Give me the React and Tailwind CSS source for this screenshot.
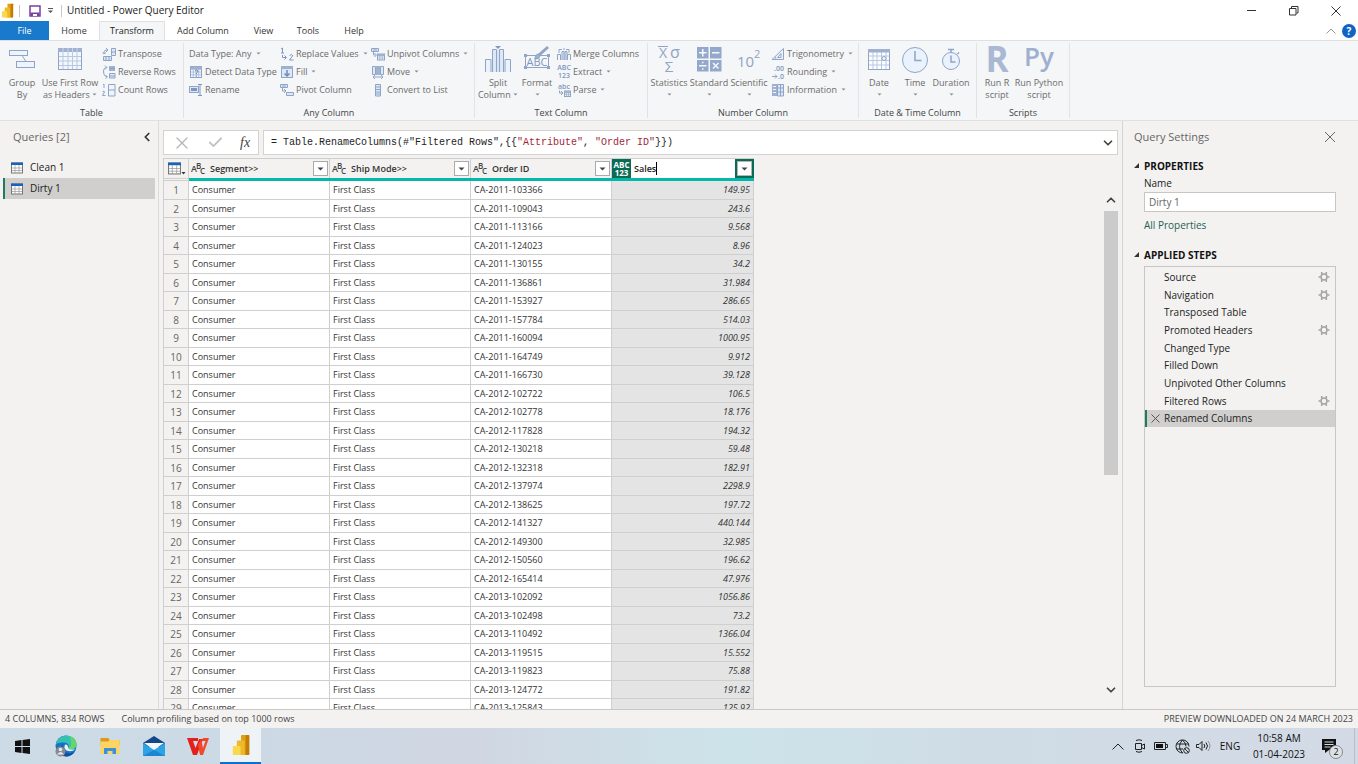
import React from "react";
import { ChevronDown, ChevronUp, ChevronLeft, X, Check } from "lucide-react";

const LINE = "#8fa4c6";
const FILL = "#dde8f6";
const DARK = "#9fb1cf";

const rows = [
  ["CA-2011-103366", "149.95"],
  ["CA-2011-109043", "243.6"],
  ["CA-2011-113166", "9.568"],
  ["CA-2011-124023", "8.96"],
  ["CA-2011-130155", "34.2"],
  ["CA-2011-136861", "31.984"],
  ["CA-2011-153927", "286.65"],
  ["CA-2011-157784", "514.03"],
  ["CA-2011-160094", "1000.95"],
  ["CA-2011-164749", "9.912"],
  ["CA-2011-166730", "39.128"],
  ["CA-2012-102722", "106.5"],
  ["CA-2012-102778", "18.176"],
  ["CA-2012-117828", "194.32"],
  ["CA-2012-130218", "59.48"],
  ["CA-2012-132318", "182.91"],
  ["CA-2012-137974", "2298.9"],
  ["CA-2012-138625", "197.72"],
  ["CA-2012-141327", "440.144"],
  ["CA-2012-149300", "32.985"],
  ["CA-2012-150560", "196.62"],
  ["CA-2012-165414", "47.976"],
  ["CA-2013-102092", "1056.86"],
  ["CA-2013-102498", "73.2"],
  ["CA-2013-110492", "1366.04"],
  ["CA-2013-119515", "15.552"],
  ["CA-2013-119823", "75.88"],
  ["CA-2013-124772", "191.82"],
  ["CA-2013-125843", "125.92"],
];

const steps = [
  { name: "Source", gear: true },
  { name: "Navigation", gear: true },
  { name: "Transposed Table" },
  { name: "Promoted Headers", gear: true },
  { name: "Changed Type" },
  { name: "Filled Down" },
  { name: "Unpivoted Other Columns" },
  { name: "Filtered Rows", gear: true },
  { name: "Renamed Columns", active: true },
];

/* ---------- ribbon icons ---------- */

function Svg({ w = 14, h = 14, children }) {
  return (
    <svg width={w} height={h} viewBox={`0 0 ${w} ${h}`} fill="none" stroke={LINE} strokeWidth="1" className="shrink-0 overflow-visible">
      {children}
    </svg>
  );
}

// little grid with a dark header, reused by several icons
function Grid({ x, y, w, h, cols = 3, rws = 3, head = DARK }) {
  const lines = [];
  for (let i = 1; i < cols; i++) lines.push(`M${x + (w / cols) * i} ${y}v${h}`);
  for (let i = 1; i < rws; i++) lines.push(`M${x} ${y + (h / rws) * i}h${w}`);
  return (
    <g>
      <rect x={x} y={y} width={w} height={h} fill="#f2f7fd" />
      <path d={lines.join("")} strokeOpacity=".6" />
      <rect x={x} y={y} width={w} height={h / rws} fill={head} stroke="none" />
    </g>
  );
}

const GroupByIcon = () => (
  <Svg w={28} h={28}>
    <rect x="1.5" y="5.5" width="18" height="5" fill="#eef4fc" />
    <path d="M14 10.5l4 6" />
    <rect x="8.5" y="16.5" width="18" height="6" fill="#eef4fc" />
  </Svg>
);
const HeadersIcon = () => (
  <Svg w={28} h={28}>
    <rect x="2.5" y="3.5" width="23" height="21" fill="#f2f7fd" />
    <path d="M7 4v20M12 4v20M16.5 4v20M21 4v20M3 11.5h22M3 16h22M3 20.5h22" stroke="#b9c8e0" />
    <path d="M2 3h24v4H2z" fill={DARK} stroke="none" />
    <path d="M7 3v4M12 3v4M16.5 3v4M21 3v4" stroke="#c9d5e8" />
  </Svg>
);
const TransposeIcon = () => (
  <Svg>
    <path d="M9.5 1.5h4v7h-4zM9.5 5h4M1.5 9.5h8v4h-8zM4 9.5v4M7 9.5v4" fill={FILL} />
    <path d="M2 7V5q0-2 3-2M4 1l2 2-2 2M.5 5.500L2 7l2-1.5" />
  </Svg>
);
const ReverseIcon = () => (
  <Svg>
    <rect x="7" y="1" width="6" height="5" fill={DARK} stroke="none" />
    <path d="M7.5 8.500h5.500v4.500H7.500zM7.500 11h5.500M7 3.500h6" fill={FILL} />
    <path d="M4.500 2.500Q1.500 2.500 1.500 7t3.500 5M3 .5l2 2-2 2M3.500 10l2 2-2 1.500" />
  </Svg>
);
const CountIcon = () => (
  <Svg>
    <path d="M1 2l1-1v4M.5 8.500q2-1 2 .5L.5 12.500h3" />
    <path d="M6.500 1.500h6.500v11.500H6.500zM6.500 7h6.500" fill="#eef4fc" />
  </Svg>
);
const DetectIcon = () => (
  <Svg>
    <Grid x={1.5} y={1.5} w={11} h={11} cols={4} rws={4} />
    <path d="M6 6q2-2 3 0 0 1-1.500 2v1M7.500 10.500v1" stroke="#6f8bb8" />
  </Svg>
);
const RenameIcon = () => (
  <Svg>
    <rect x=".5" y="3.500" width="9" height="6" fill={FILL} />
    <rect x="2" y="5" width="6" height="3" fill="#7f97bf" stroke="none" />
    <path d="M9 1.500h4M9 12.500h4M11 2v10" stroke="#7f97bf" />
  </Svg>
);
const ReplaceIcon = () => (
  <Svg>
    <path d="M1 2l1.500-1v5M1 6h3M2.500 8v2.500H6M4.500 8.500l2 2-2 2M9.500 8.500Q12.500 6.500 12.500 9L9.500 13H13.500" stroke="#7f97bf" />
  </Svg>
);
const FillIcon = () => (
  <Svg>
    <rect x="1.5" y="1.5" width="11" height="11" fill={FILL} />
    <path d="M1 1h12v3H1z" fill={DARK} stroke="none" />
    <path d="M7 5v6M4.500 8.500L7 11l2.500-2.500" stroke="#6f8bb8" strokeWidth="1.500" />
  </Svg>
);
const PivotIcon = () => (
  <Svg>
    <path d="M.5 1.500h7v3h-7zM3 1.500v3M5 1.500v3M6.500 9.500h7v3h-7z" fill={FILL} />
    <path d="M2.500 4.500V8h3M4 6l2 2-2 2" />
  </Svg>
);
const UnpivotIcon = () => (
  <Svg>
    <path d="M.5 1.500h7v3h-7zM3 1.500v3M5 1.500v3" fill={FILL} />
    <path d="M2.500 4.500V8h2M3.500 6l2 2-2 2" />
    <Grid x={6.5} y={7} w={7} h={6} />
  </Svg>
);
const MoveIcon = () => (
  <Svg>
    <path d="M1.500 1.500h3v8h-3zM9.500 1.500h3v8h-3z" fill={FILL} />
    <rect x="5" y="1" width="4" height="9" fill={DARK} stroke="none" />
    <path d="M2 12h10M4 10l-2 2 2 2M10 10l2 2-2 2" />
  </Svg>
);
const ListIcon = () => (
  <Svg>
    <path d="M4.500 1.500h5v11.500h-5zM4.500 4h5M4.500 6.500h5M4.500 9h5M4.500 11h5" fill={FILL} />
  </Svg>
);
const SplitIcon = () => (
  <Svg w={28} h={28}>
    <path d="M1.500 27V14.500h5.500V27M21 27V14.500h5.500V27" fill="#eaf3fd" />
    <path d="M8.500 27V4.500h4V27M15.500 27V4.500h4V27" fill={FILL} />
    <path d="M14 5v22" stroke="#c5d2e6" />
    <path d="M11 1h6l-3 3z" fill="#7f97bf" stroke="none" />
  </Svg>
);
const FormatIcon = () => (
  <Svg w={28} h={28}>
    <rect x="2.500" y="10.500" width="23" height="12" />
    <path d="M1 9h3v3H1zM24 9h3v3h-3zM1 21h3v3H1zM24 21h3v3h-3z" fill="#8fa4c6" stroke="none" />
    <text x="14" y="21" textAnchor="middle" fontSize="11" fontFamily="Open Sans, sans-serif" fill="#7f97bf" stroke="none">ABC</text>
    <path d="M25 2l-9 8" strokeWidth="3" />
    <path d="M16 9q-4 0-4 5 5 0 5-4z" fill={DARK} />
  </Svg>
);
const MergeIcon = () => (
  <Svg>
    <path d="M.5 13V7.500h3V13M10.500 13V7.500h3V13" />
    <path d="M5 13V4.500h2V13M8 13V4.500h2V13" fill={FILL} />
    <path d="M2 6V2.500h3M9 2.500h3V6M7 1v2" />
  </Svg>
);
const ExtractIcon = () => (
  <span className="flex flex-col items-center w-[14px] text-[7px] leading-[8px] font-semibold text-[#7f97bf]">
    <span>ABC</span>
    <span>123</span>
  </span>
);
const ParseIcon = () => (
  <Svg>
    <text x="7" y="6" textAnchor="middle" fontSize="7" fontWeight="600" fontFamily="Open Sans, sans-serif" fill="#7f97bf" stroke="none">abc</text>
    <path d="M2.500 7.500V10H5M4 8l2 2-2 2" />
    <Grid x={7.5} y={8} w={6} h={5.5} />
  </Svg>
);
const StatsIcon = () => (
  <Svg w={28} h={28}>
    <g fontFamily="Open Sans, sans-serif" fill="#8fa4c6" stroke="none" textAnchor="middle">
      <text x="8" y="13" fontSize="14">X</text>
      <text x="20" y="13" fontSize="16">σ</text>
      <text x="14" y="27" fontSize="15">Σ</text>
    </g>
    <path d="M3 1.500h10" />
  </Svg>
);
const StandardIcon = () => (
  <Svg w={28} h={28}>
    <path d="M2 2h11.500v11.500H2zM15 2h11.500v11.500H15zM2 15h11.500v11.500H2zM15 15h11.500v11.500H15z" fill="#93a8cb" stroke="none" />
    <path d="M4 7.750h7.500M7.750 4v7.500M17 7.750h7.500M4 20.750h7.500M18 18l5.500 5.500M23.500 18L18 23.500" stroke="#f4f7fb" strokeWidth="1.500" />
    <path d="M7 17.500h1.500M7 24h1.500" stroke="#f4f7fb" strokeWidth="1.500" />
  </Svg>
);
const ScientificIcon = () => (
  <Svg w={28} h={28}>
    <g fontFamily="Open Sans, sans-serif" fill="#8fa4c6" stroke="none">
      <text x="2" y="22" fontSize="15">10</text>
      <text x="19" y="13" fontSize="11">2</text>
    </g>
  </Svg>
);
const TrigIcon = () => (
  <Svg>
    <path d="M1 12.500L12.500 1.500v11zM6.500 10.500L10 6.500v4z" fill="#eef4fc" />
    <path d="M4 10q1 1 1 2.500" />
  </Svg>
);
const RoundingIcon = () => (
  <Svg>
    <g fontFamily="Open Sans, sans-serif" fill="#7f97bf" stroke="none" fontSize="7" fontWeight="600">
      <text x="3" y="6">.00</text>
      <text x="7" y="14">.0</text>
    </g>
    <path d="M1 11.500h5M4 9.500l2 2-2 2" />
  </Svg>
);
const InfoIcon = () => (
  <Svg>
    <rect x="1" y="1" width="5" height="12" fill={DARK} stroke="none" />
    <path d="M2 3.500h3M2 6.500h3M2 9.500h3" stroke="#eef4fc" />
    <path d="M6.500 1.500h6v11.500h-6zM6.500 5h6M6.500 9h6M9.500 1.500v11.500" fill={FILL} />
  </Svg>
);
const DateIcon = () => (
  <Svg w={28} h={28}>
    <rect x="3.500" y="4.500" width="21" height="20" fill="#fbfdff" />
    <path d="M8 7v17M12 7v17M16.500 7v17M21 7v17M4 11h20M4 15.500h20M4 20h20" stroke="#b9c8e0" />
    <path d="M3 4h22v3.500H3z" fill={DARK} stroke="none" />
    <circle cx="19" cy="13.500" r="2" fill="#f2f7fd" />
  </Svg>
);
const TimeIcon = () => (
  <Svg w={28} h={28}>
    <circle cx="14" cy="15" r="12.500" fill="#eaf3fd" />
    <path d="M14 6v9.500h6.500" strokeWidth="1.500" />
  </Svg>
);
const DurationIcon = () => (
  <Svg w={28} h={28}>
    <circle cx="14" cy="16" r="8.500" fill="#eaf3fd" />
    <path d="M14 10.500V17h4.500M14 7V5M11 4.500h6M20.500 9l1.500-1.500" strokeWidth="1.500" />
  </Svg>
);
const RIcon = () => (
  <Svg w={28} h={28}>
    <text x="14" y="27" textAnchor="middle" fontSize="35" fontWeight="700" fontFamily="Open Sans, sans-serif" fill="#a9b8d3" stroke="none">R</text>
  </Svg>
);
const PyIcon = () => (
  <Svg w={32} h={28}>
    <text x="16" y="21" textAnchor="middle" fontSize="26" fontWeight="600" fontFamily="Open Sans, sans-serif" fill="#9db0d0" stroke="none">Py</text>
  </Svg>
);

/* ---------- ribbon parts ---------- */

function Caret() {
  return (
    <svg width="5" height="3" viewBox="0 0 5 3" className="inline-block shrink-0 mb-[2px]">
      <path d="M.5.5h4L2.500 2.500z" fill="#8a8a8a" />
    </svg>
  );
}

function Small({ icon: Icon, label, caret }) {
  return (
    <button className="flex items-center gap-[2px] h-[18px] whitespace-nowrap">
      {Icon && <Icon />}
      <span>{label}</span>
      {caret && <span className="flex pl-[2px]"><Caret /></span>}
    </button>
  );
}

function Big({ icon: Icon, lines, caret, width }) {
  return (
    <button className={`flex flex-col items-center shrink-0 whitespace-nowrap leading-[12px] ${width}`}>
      <span className="h-[32px] flex items-start"><Icon /></span>
      <span>{lines[0]}</span>
      <span>
        {lines[1]} {caret && <Caret />}
      </span>
    </button>
  );
}

function Group({ title, width, children }) {
  return (
    <section className={`flex flex-col justify-between shrink-0 border-r border-[#e1e3e6] ${width}`}>
      <div className="flex pt-[2px]">{children}</div>
      <h2 className="text-center text-[#444] leading-[10px]">{title}</h2>
    </section>
  );
}

function Ribbon() {
  return (
    <div className="flex bg-[#f5f6f7] border-y border-[#dfe0e1] h-[81px] py-[2px] shrink-0 text-[9px] text-[#6b6b6b]">
      <Group title="Table" width="w-[184px] px-[2px]">
        <Big icon={GroupByIcon} lines={["Group", "By"]} width="w-[40px]" />
        <Big icon={HeadersIcon} lines={["Use First Row", "as Headers"]} caret width="w-[56px]" />
        <div className="flex flex-col pl-[4px]">
          <Small icon={TransposeIcon} label="Transpose" />
          <Small icon={ReverseIcon} label="Reverse Rows" />
          <Small icon={CountIcon} label="Count Rows" />
        </div>
      </Group>
      <Group title="Any Column" width="w-[291px] px-[5px]">
        <div className="flex flex-col w-[91px]">
          <Small label="Data Type: Any" caret />
          <Small icon={DetectIcon} label="Detect Data Type" />
          <Small icon={RenameIcon} label="Rename" />
        </div>
        <div className="flex flex-col w-[91px]">
          <Small icon={ReplaceIcon} label="Replace Values" caret />
          <Small icon={FillIcon} label="Fill" caret />
          <Small icon={PivotIcon} label="Pivot Column" />
        </div>
        <div className="flex flex-col">
          <Small icon={UnpivotIcon} label="Unpivot Columns" caret />
          <Small icon={MoveIcon} label="Move" caret />
          <Small icon={ListIcon} label="Convert to List" />
        </div>
      </Group>
      <Group title="Text Column" width="w-[173px] px-[2px]">
        <Big icon={SplitIcon} lines={["Split", "Column"]} caret width="w-[42px]" />
        <Big icon={FormatIcon} lines={["Format", ""]} caret width="w-[36px]" />
        <div className="flex flex-col pl-[2px]">
          <Small icon={MergeIcon} label="Merge Columns" />
          <Small icon={ExtractIcon} label="Extract" caret />
          <Small icon={ParseIcon} label="Parse" caret />
        </div>
      </Group>
      <Group title="Number Column" width="w-[211px] px-px">
        <Big icon={StatsIcon} lines={["Statistics", ""]} caret width="w-[40px]" />
        <Big icon={StandardIcon} lines={["Standard", ""]} caret width="w-[40px]" />
        <Big icon={ScientificIcon} lines={["Scientific", ""]} caret width="w-[40px]" />
        <div className="flex flex-col pl-[2px]">
          <Small icon={TrigIcon} label="Trigonometry" caret />
          <Small icon={RoundingIcon} label="Rounding" caret />
          <Small icon={InfoIcon} label="Information" caret />
        </div>
      </Group>
      <Group title="Date & Time Column" width="w-[118px] px-[2px]">
        <Big icon={DateIcon} lines={["Date", ""]} caret width="w-[36px]" />
        <Big icon={TimeIcon} lines={["Time", ""]} caret width="w-[36px]" />
        <Big icon={DurationIcon} lines={["Duration", ""]} caret width="w-[36px]" />
      </Group>
      <Group title="Scripts" width="w-[93px] px-[2px]">
        <Big icon={RIcon} lines={["Run R", "script"]} width="w-[36px]" />
        <Big icon={PyIcon} lines={["Run Python", "script"]} width="w-[48px]" />
      </Group>
    </div>
  );
}

/* ---------- window chrome ---------- */

function PowerBi({ size }) {
  return (
    <svg width={size} height={size} viewBox="0 0 24 24">
      <rect x="12" y="1" width="9" height="22" rx="1" fill="#e0a012" />
      <rect x="17" y="1" width="4" height="22" rx="1" fill="#c27c08" />
      <rect x="7.500" y="7" width="8.500" height="16" rx="1" fill="#efb826" />
      <rect x="3" y="13" width="8.500" height="10" rx="1" fill="#f8d84f" />
    </svg>
  );
}

function TitleBar() {
  return (
    <header className="flex items-center h-[21px] shrink-0 bg-white text-[#222]">
      <PowerBi size={15} />
      <span className="w-px h-[12px] bg-[#c8c8c8] ml-[4px]" />
      <button aria-label="Save" className="ml-[9px]">
        <svg width="12" height="12" viewBox="0 0 12 12" fill="none" stroke="#7a3fa0">
          <path d="M1 1h10v10H1z" strokeWidth="1.500" fill="#fff" />
          <path d="M1.500 7.500h9V11h-9z" fill="#7a3fa0" stroke="none" />
          <path d="M4 9h4v2H4z" fill="#fff" stroke="none" />
        </svg>
      </button>
      <button aria-label="Customize toolbar" className="ml-[6px]">
        <svg width="7" height="6" viewBox="0 0 7 6"><path d="M1 .5h5" stroke="#555" /><path d="M1 2.500h5L3.500 5z" fill="#555" /></svg>
      </button>
      <span className="w-px h-[12px] bg-[#c8c8c8] ml-[7px]" />
      <h1 className="ml-[5px] text-[10px]">Untitled - Power Query Editor</h1>
      <div className="ml-auto flex items-center text-[#333]">
        <button aria-label="Minimize" className="w-[42px] flex justify-center">
          <svg width="10" height="10"><path d="M0 4.500h9" stroke="currentColor" /></svg>
        </button>
        <button aria-label="Restore" className="w-[41px] flex justify-center">
          <svg width="10" height="10" fill="none" stroke="currentColor"><path d="M.5 2.500h6.500v6.500H.5zM2.500 2V.5H9v6.500H7.500" /></svg>
        </button>
        <button aria-label="Close" className="w-[44px] flex justify-center">
          <svg width="10" height="10" stroke="currentColor"><path d="M.5.5l9 9M9.500.5l-9 9" /></svg>
        </button>
      </div>
    </header>
  );
}

function Tabs() {
  return (
    <nav className="flex h-[19px] shrink-0 bg-white text-[9px] text-[#333]">
      <button className="w-[49px] bg-[#1979ca] text-white">File</button>
      <button className="w-[50px]">Home</button>
      <button className="w-[66px] bg-[#f5f6f7] border border-b-0 border-[#dfe0e1] text-[#222]">Transform</button>
      <button className="w-[76px]">Add Column</button>
      <button className="w-[45px]">View</button>
      <button className="w-[44px]">Tools</button>
      <button className="w-[48px]">Help</button>
      <div className="ml-auto flex items-center gap-[6px] pr-[2px]">
        <button aria-label="Collapse ribbon">
          <svg width="10" height="6" fill="none" stroke="#999"><path d="M.5 5.500L5 1l4.500 4.500" /></svg>
        </button>
        <button aria-label="Help" className="size-[14px] rounded-full bg-[#1065c4] text-white text-[10px] font-bold leading-[14px]">?</button>
      </div>
    </nav>
  );
}

function TableIcon({ size = 12 }) {
  return (
    <svg width={size} height={size} viewBox="0 0 12 12" fill="none" className="shrink-0">
      <rect x=".5" y="1" width="11" height="10" fill="#fff" stroke="#777" />
      <path d="M4 3v8M8 3v8M1 6h10M1 8.500h10" stroke="#999" strokeWidth=".7" />
      <rect x="0" y=".5" width="12" height="2.500" fill="#1b62b5" />
    </svg>
  );
}

function Queries() {
  return (
    <aside className="w-[159px] shrink-0 border-r border-[#dcdbda] text-[10px] text-[#222]">
      <div className="flex items-center justify-between h-[32px] pl-[13px] pr-[4px]">
        <h2 className="text-[11px] text-[#666]">Queries [2]</h2>
        <button aria-label="Collapse queries"><ChevronLeft size={14} strokeWidth={3} color="#333" /></button>
      </div>
      <ul className="pt-[4px] pl-[3px] pr-[3px]">
        <li>
          <button className="flex items-center gap-[7px] w-full h-[21px] pl-[6px] border-l-2 border-transparent">
            <TableIcon />Clean 1
          </button>
        </li>
        <li>
          <button className="flex items-center gap-[7px] w-full h-[21px] pl-[6px] border-l-2 border-[#217a5f] bg-[#d0cfcd]">
            <TableIcon />Dirty 1
          </button>
        </li>
      </ul>
    </aside>
  );
}

function FormulaBar() {
  return (
    <div className="flex gap-[4px] h-[25px] shrink-0 mr-[4px]">
      <div className="flex items-center justify-around w-[96px] shrink-0 bg-white border border-[#d4d3d2]">
        <button aria-label="Cancel"><X size={20} strokeWidth={1.500} color="#b5b5b5" /></button>
        <button aria-label="Commit"><Check size={17} strokeWidth={2.500} color="#c2c2c2" /></button>
        <button aria-label="Insert step" className="font-['Liberation_Serif',serif] italic text-[14px] text-[#444] leading-none">fx</button>
      </div>
      <div className="flex items-center flex-1 min-w-0 bg-white border border-[#d4d3d2] pl-[7px] pr-[2px]">
        <div role="textbox" aria-label="Formula" className="flex-1 whitespace-pre font-['Liberation_Mono',monospace] text-[10px] text-[#222]">
          {'= Table.RenameColumns(#"Filtered Rows",{{'}
          <span className="text-[#a31f34]">"Attribute"</span>
          {", "}
          <span className="text-[#a31f34]">"Order ID"</span>
          {"}})"}
        </div>
        <button aria-label="Expand formula"><ChevronDown size={14} strokeWidth={3} color="#444" /></button>
      </div>
    </div>
  );
}

function FilterButton({ label, active }) {
  return (
    <button
      aria-label={`Filter ${label}`}
      className={`flex items-center justify-center size-[15px] bg-white border shrink-0 ${active ? "border-[#b5b5b5] outline-2 outline-[#0b6a56] mr-px" : "border-[#aaa] mr-px"}`}
    >
      <svg width="7" height="4"><path d="M.5.5h6l-3 3z" fill="#444" /></svg>
    </button>
  );
}

function TextTypeIcon() {
  return (
    <svg width="15" height="14" viewBox="0 0 15 14" fontFamily="Open Sans, sans-serif" fontWeight="600" fill="#444" className="shrink-0 overflow-visible">
      <text x="0" y="10" fontSize="9">A</text>
      <text x="5" y="7" fontSize="8">B</text>
      <text x="9" y="12" fontSize="8">C</text>
    </svg>
  );
}

function DataGrid() {
  const th = "p-0 h-[20px] border-t border-r border-[#cfcfcf] font-semibold";
  const td = "p-0 pl-[3px] border-r border-b border-[#cfcfcf]";
  return (
    <table className="table-fixed border-separate border-spacing-0 w-[591px] leading-[12px] text-[9px] text-[#333] border-l border-[#cfcfcf]">
      <colgroup>
        <col className="w-[25px]" />
        <col className="w-[141px]" />
        <col className="w-[141px]" />
        <col className="w-[141px]" />
        <col className="w-[142px]" />
      </colgroup>
      <thead>
        <tr>
          <th className={th}>
            <button aria-label="Table menu" className="flex items-end pl-[4px]">
              <TableIcon size={13} />
              <svg width="5" height="3"><path d="M.5 0h4l-2 2.500z" fill="#333" /></svg>
            </button>
          </th>
          {["Segment>>", "Ship Mode>>", "Order ID"].map((name) => (
            <th key={name} className={th}>
              <div className="flex items-center pl-[2px]">
                <TextTypeIcon />
                <span className="pl-[4px] flex-1 text-left">{name}</span>
                <FilterButton label={name} />
              </div>
            </th>
          ))}
          <th className={th}>
            <div className="flex items-center h-[19px] bg-white text-[#222]">
              <span className="flex flex-col items-center justify-center w-[19px] h-full shrink-0 bg-[#0b6a56] text-white text-[8px] leading-[8px] font-bold">
                <span>ABC</span>
                <span>123</span>
              </span>
              <div className="flex items-center flex-1 pl-[3px]">
                <input aria-label="Column name" defaultValue="Sales" className="field-sizing-content font-semibold outline-none" />
                <span className="w-px h-[13px] bg-black" />
              </div>
              <FilterButton label="Sales" active />
            </div>
          </th>
        </tr>
        <tr>
          <th className="p-0 h-[3px] border-y border-r border-[#cfcfcf]" />
          <th colSpan={4} className="p-0 h-[3px] bg-[#01b8aa]" />
        </tr>
      </thead>
      <tbody>
        {rows.map(([order, sales], i) => (
          <tr key={order} className="odd:h-[19px] even:h-[18px]">
            <td className="p-0 border-r border-b border-[#cfcfcf] text-center text-[10px] text-[#666]">{i + 1}</td>
            <td className={`${td} bg-white`}>Consumer</td>
            <td className={`${td} bg-white`}>First Class</td>
            <td className={`${td} bg-white`}>{order}</td>
            <td className="p-0 pr-[3px] border-r border-b border-[#cfcfcf] bg-[#e4e4e4] text-right italic">{sales}</td>
          </tr>
        ))}
      </tbody>
    </table>
  );
}

function Scrollbar() {
  return (
    <div className="flex flex-col w-[14px] shrink-0 mt-[33px] mb-[12px] mr-[4px]">
      <button aria-label="Scroll up" className="flex items-center h-[20px] pb-[2px]"><ChevronUp size={14} strokeWidth={3} color="#444" /></button>
      <div className="flex-1">
        <div className="h-[56%] bg-[#cbcbcb]" />
      </div>
      <button aria-label="Scroll down" className="h-[14px]"><ChevronDown size={14} strokeWidth={3} color="#444" /></button>
    </div>
  );
}

function SectionTitle({ children }) {
  return (
    <h3 className="flex items-center h-[18px] font-bold text-[10px] text-[#111]">
      <svg width="10" height="7" className="shrink-0"><path d="M5 0v5H0z" fill="#333" /></svg>
      {children}
    </h3>
  );
}

function Gear() {
  return (
    <svg width="12" height="12" viewBox="0 0 12 12" fill="none" stroke="#a3a3a3">
      <circle cx="6" cy="6" r="3" strokeWidth="1.500" />
      <path d="M3.700 1v2M8.300 1v2M3.700 9v2M8.300 9v2M.5 6h2M9.500 6h2" strokeWidth="1.500" />
    </svg>
  );
}

function QuerySettings() {
  return (
    <aside className="flex flex-col w-[236px] shrink-0 border-l border-[#d5d4d3] pl-[11px] pr-[22px] pb-[22px] text-[10px] text-[#222]">
      <div className="flex items-center justify-between h-[32px] shrink-0">
        <h2 className="text-[11px] text-[#666]">Query Settings</h2>
        <button aria-label="Close settings">
          <svg width="12" height="12" stroke="#666"><path d="M1 1l10 10M11 1L1 11" /></svg>
        </button>
      </div>
      <div className="pt-[4px]">
        <SectionTitle>PROPERTIES</SectionTitle>
      </div>
      <div className="flex flex-col pl-[10px]">
        <label htmlFor="query-name" className="leading-[17px]">Name</label>
        <input id="query-name" defaultValue="Dirty 1" className="h-[20px] w-full bg-white border border-[#c8c6c4] px-[4px] text-[#666] outline-none" />
        <a href="#" className="text-[#1f5f56] leading-[26px]">All Properties</a>
      </div>
      <div className="pt-[8px]">
        <SectionTitle>APPLIED STEPS</SectionTitle>
      </div>
      <ol className="flex-1 ml-[10px] mt-[2px] pt-px border border-[#c8c6c4]">
        {steps.map((s) => (
          <li
            key={s.name}
            className={`flex items-center h-[18px] nth-[3n]:h-[17px] pr-[5px] border-l-2 ${s.active ? "bg-[#d0cfcd] border-[#217a5f]" : "border-transparent"}`}
          >
            <span className="w-[17px] flex justify-center">
              {s.active && (
                <button aria-label="Delete step">
                  <svg width="9" height="9" stroke="#555"><path d="M.5.5l8 8M8.500.5l-8 8" /></svg>
                </button>
              )}
            </span>
            <span className="flex-1">{s.name}</span>
            {s.gear && (
              <button aria-label={`Edit ${s.name}`}><Gear /></button>
            )}
          </li>
        ))}
      </ol>
    </aside>
  );
}

/* ---------- taskbar ---------- */

function TaskButton({ label, active, children }) {
  return (
    <button
      aria-label={label}
      className={`flex items-center justify-center h-full ${active ? "w-[41px] bg-[#eef3f8] border-b-2 border-[#0a6fd0]" : "w-[44px]"}`}
    >
      {children}
    </button>
  );
}

function Taskbar() {
  return (
    <footer className="flex items-center h-[36px] shrink-0 bg-[linear-gradient(90deg,#cddbe7_0%,#ccdae6_18%,#d0d6e2_34%,#cde3ea_54%,#cfdce6_72%,#d3dae5_100%)] text-[10px] text-[#111]">
      <TaskButton label="Start">
        <svg width="15" height="15" viewBox="0 0 15 15"><path d="M0 2l6.500-1v6H0zM7.500 1L15 0v7H7.500zM0 8h6.500v6L0 13zM7.500 8H15v7l-7.500-1z" fill="#111" /></svg>
      </TaskButton>
      <TaskButton label="Edge">
        <svg width="22" height="22" viewBox="0 0 22 22">
          <circle cx="11" cy="11" r="10.500" fill="#1673c7" />
          <path d="M.8 9.500C2 4 6 .5 11 .5c6 0 10.500 4 10.500 8.500 0 4-3 5.500-6 5.500-2 0-2.500-1-2-2 1-2-.5-5-4.500-5C5 7.500 2 8 .8 9.500z" fill="#35c1b1" />
          <path d="M14 1c5 1.500 7.500 5 7.500 8 0 4-3 5.500-6 5.500-2 0-2.500-1-2-2 3 0 4-6 .5-11.500z" fill="#66d56a" />
          <path d="M9 8c-3 3-2 8 3 10 3 1 6 0 8-2-2 4-6 5.500-9 5.500C7 21 5 15 6 11z" fill="#0d4f9c" />
          <path d="M10 10c1-1 3 0 3 2 0 3 4 3 7 2-2 3-8 3-10 0-1-2-.5-3 0-4z" fill="#e7f1f8" />
          <circle cx="5.500" cy="16.500" r="5" fill="#858b92" />
          <circle cx="5.500" cy="14.500" r="1.800" fill="#e7e7e7" />
          <path d="M2 19.500q3.500-5 7 0z" fill="#e7e7e7" />
        </svg>
      </TaskButton>
      <TaskButton label="File Explorer">
        <svg width="20" height="18" viewBox="0 0 20 18">
          <path d="M.5 1h8l1 2h10v5H.5z" fill="#e0971c" />
          <path d="M.5 4.500h8l1-1.500h10v14H.5z" fill="#fcd462" />
          <path d="M4 17v-6h12v6h-3.500v-3h-5v3z" fill="#3a90dc" />
        </svg>
      </TaskButton>
      <TaskButton label="Mail">
        <svg width="22" height="20" viewBox="0 0 22 20">
          <path d="M0 7l11-7 11 7v4H0z" fill="#12478a" />
          <path d="M1 7h20l-10 7z" fill="#f5f8fb" />
          <path d="M0 7l11 7 11-7v13H0z" fill="#2aa4e4" />
          <path d="M0 20l11-6 11 6z" fill="#1c86d1" />
        </svg>
      </TaskButton>
      <TaskButton label="WPS Office">
        <svg width="22" height="17" viewBox="0 0 22 17">
          <path d="M0 0h11v3H6l2.500 7L12 1h4l-6 16H6z" fill="#e3201b" />
          <path d="M11 7l3-6 2 9L18.500 3H15l1-3h6l-6 17h-3z" fill="#f2482a" />
        </svg>
      </TaskButton>
      <TaskButton label="Power BI" active>
        <PowerBi size={22} />
      </TaskButton>
      <div className="ml-auto flex items-center h-full">
        <button aria-label="Show hidden icons" className="w-[22px] flex justify-center">
          <svg width="12" height="7" fill="none" stroke="#222"><path d="M.5 6.500L6 1l5.500 5.500" /></svg>
        </button>
        <span className="w-[21px] flex justify-center">
          <svg width="12" height="14" fill="none" stroke="#222"><path d="M1.500 4.500h6v6h-6zM7.500 6.500l3-1.500v5l-3-1.500M2 1.500q3-1.500 6 0M2 12.500q3 1.500 6 0" /></svg>
        </span>
        <span className="w-[21px] flex justify-center">
          <svg width="14" height="8"><path d="M.5.5h11v7H.5zM12 2.500h1.500v3H12" fill="none" stroke="#222" /><path d="M2 2h7v4H2z" fill="#111" /></svg>
        </span>
        <span className="w-[22px] flex justify-center">
          <svg width="15" height="15" fill="none" stroke="#222">
            <path d="M8 13.900A6.500 6.500 0 1 1 14 7.500M7.500 1Q1.500 7.500 7.500 14M7.500 1q3.500 3 3.500 6.500M1.500 5h12M1.500 10H8" />
            <circle cx="11.500" cy="11.500" r="2.800" />
            <path d="M9.500 9.500l4 4" />
          </svg>
        </span>
        <span className="w-[20px] flex justify-center">
          <svg width="15" height="12" fill="none" stroke="#222"><path d="M.5 4.500H3l3-3v9l-3-3H.5zM8 4q1.500 2 0 4M10 2.500q3 3.500 0 7" /><path d="M12 1q4 5 0 10" stroke="#8a9099" /></svg>
        </span>
        <button className="w-[34px]">ENG</button>
        <button className="w-[64px] leading-[16px]">
          10:58 AM<br />01-04-2023
        </button>
        <button aria-label="Notifications" className="relative w-[44px] h-full mr-[3px] flex items-center justify-center border-r border-[#b8c0ca]">
          <svg width="15" height="14" className="mr-[6px]"><path d="M0 0h14v11H7l-4 3v-3H0z" fill="#111" /><path d="M2.500 3h9M2.500 5.500h9M2.500 8h6" stroke="#d4dae4" /></svg>
          <span className="absolute left-[18px] top-[17px] size-[14px] rounded-full bg-[#dde1e6] border border-[#888] text-[9px] leading-[12px]">2</span>
        </button>
      </div>
    </footer>
  );
}

export default function App() {
  return (
    <div className="flex flex-col h-screen overflow-hidden bg-[#f3f2f1] font-['Open_Sans','Noto_Sans',sans-serif]">
      <TitleBar />
      <Tabs />
      <Ribbon />
      <main className="flex flex-1 min-h-0 overflow-hidden">
        <Queries />
        <div className="flex flex-col flex-1 min-w-0 pl-[4px] pt-[9px]">
          <FormulaBar />
          <div className="flex flex-1 min-h-0 pt-[3px]">
            <div className="flex-1 min-w-0 overflow-hidden">
              <DataGrid />
            </div>
            <Scrollbar />
          </div>
        </div>
        <QuerySettings />
      </main>
      <div className="flex items-center h-[19px] shrink-0 border-t border-[#c9c8c7] px-[5px] gap-[17px] text-[9px] text-[#444]">
        <span>4 COLUMNS, 834 ROWS</span>
        <span>Column profiling based on top 1000 rows</span>
        <span className="ml-auto">PREVIEW DOWNLOADED ON 24 MARCH 2023</span>
      </div>
      <Taskbar />
    </div>
  );
}
